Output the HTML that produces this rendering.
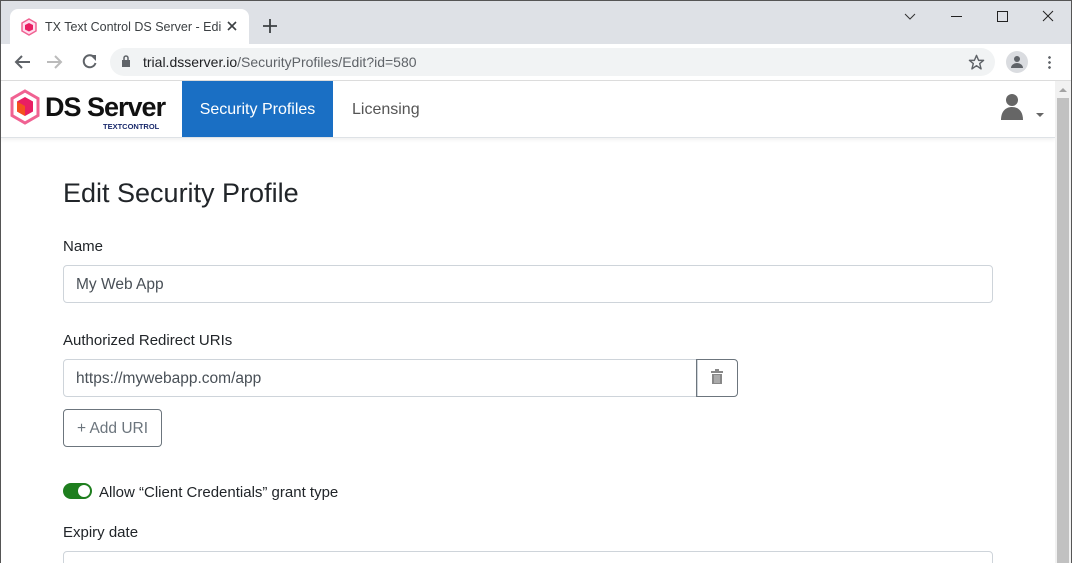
<!DOCTYPE html>
<html><head><style>
*{box-sizing:border-box;margin:0;padding:0}
html,body{width:1072px;height:563px;overflow:hidden}
body{background:#fff;font-family:"Liberation Sans",sans-serif;position:relative}
.abs{position:absolute}
.lbl{position:absolute;left:63px;font-size:15px;color:#212529}
.inp{position:absolute;border:1px solid #ced4da;border-radius:4px;font-size:15.5px;color:#495057;padding:10px 12px 0}
</style></head><body>
<div class="abs" style="left:0;top:0;width:1072px;height:44px;background:#dee1e6;border-top:1px solid #555"></div>
<div class="abs" style="left:0;top:0;width:1px;height:563px;background:#555;z-index:5"></div>
<div class="abs" style="right:0;top:0;width:1px;height:563px;background:#555;z-index:5"></div>
<div class="abs" style="left:10px;top:9px;width:239px;height:36px;background:#fff;border-radius:8px 8px 0 0"></div>
<svg class="abs" style="left:20px;top:18px" width="18" height="18" viewBox="0 0 18 18"><path d="M9 1 L16 5 V13 L9 17 L2 13 V5Z" fill="#fde" stroke="#f06292" stroke-width="1.5"/><path d="M9 5 L13 7 V11.5 L9 13.5 L5 11.5 V7Z" fill="#e91e63"/></svg>
<div class="abs" style="left:45px;top:20px;font-size:12.5px;color:#3c4043;white-space:nowrap;width:176px;overflow:hidden">TX Text Control DS Server - Edit S</div>
<svg class="abs" style="left:227px;top:21px" width="10" height="10"><path d="M1 1l8 8M9 1l-8 8" stroke="#3c4043" stroke-width="1.6"/></svg>
<svg class="abs" style="left:263px;top:19px" width="14" height="14"><path d="M7 0v14M0 7h14" stroke="#3c4043" stroke-width="1.8"/></svg>
<svg class="abs" style="left:900px;top:8px" width="170" height="20"><path d="M5 6l5 5 5-5" stroke="#333" fill="none"/><path d="M51 8.5h11" stroke="#222"/><rect x="97.5" y="3.5" width="10" height="10" stroke="#222" fill="none"/><path d="M143 3l10 10M153 3l-10 10" stroke="#222"/></svg>
<div class="abs" style="left:0;top:44px;width:1072px;height:37px;background:#fff;border-bottom:1px solid #ddd"></div>
<svg class="abs" style="left:14px;top:54px" width="120" height="16"><path d="M16 8H2M8 2L2 8l6 6" stroke="#5f6368" stroke-width="2" fill="none"/><path d="M33 8h14M41 2l6 6-6 6" stroke="#bbb" stroke-width="2" fill="none"/><path d="M80 3a6 6 0 1 0 1.5 6" stroke="#5f6368" stroke-width="2" fill="none"/><path d="M76 1h6v6z" fill="#5f6368"/></svg>
<div class="abs" style="left:110px;top:48px;width:885px;height:28px;background:#f1f3f4;border-radius:14px"></div>
<svg class="abs" style="left:121px;top:55px" width="10" height="13"><rect x="1" y="5" width="8" height="7" fill="#5f6368"/><path d="M3 5V3a2 2 0 0 1 4 0v2" stroke="#5f6368" fill="none" stroke-width="1.5"/></svg>
<div class="abs" style="left:143px;top:54px;font-size:14px;color:#202124">trial.dsserver.io<span style="color:#5f6368">/SecurityProfiles/Edit?id=580</span></div>
<svg class="abs" style="left:968px;top:54px" width="17" height="17" viewBox="0 0 24 24"><path d="M12 2l3 7h7l-5.5 4.5 2 7.5L12 16.5 5.5 21l2-7.5L2 9h7z" stroke="#5f6368" stroke-width="2" fill="none" stroke-linejoin="round"/></svg>
<div class="abs" style="left:1006px;top:51px;width:22px;height:22px;border-radius:50%;background:#dadce0"></div>
<svg class="abs" style="left:1009px;top:54px" width="16" height="16"><circle cx="8" cy="5" r="3" fill="#5f6368"/><path d="M2 14a6 5 0 0 1 12 0z" fill="#5f6368"/></svg>
<div class="abs" style="left:1048px;top:55px;width:3px;height:14px;background:radial-gradient(circle,#5f6368 1.2px,transparent 1.5px) 0 0/3px 5px"></div>
<div class="abs" style="left:0;top:81px;width:1055px;height:57px;border-bottom:1px solid #dee2e6;box-shadow:0 2px 4px rgba(0,0,0,.06)"></div>
<svg class="abs" style="left:9px;top:89px" width="32" height="36" viewBox="0 0 32 36"><path d="M16 2 L29 9.5 V26.5 L16 34 L3 26.5 V9.5Z" fill="#fff" stroke="#f06292" stroke-width="3"/><path d="M16 8 L24 12.5 V22.5 L16 27 L8 22.5 V12.5Z" fill="#e91e63"/><path d="M8 12.5 L16 17 V27 L8 22.5Z" fill="#f4511e"/></svg>
<div class="abs" style="left:45px;top:92px;font-size:27px;font-weight:bold;color:#111;letter-spacing:-1px">DS Server</div>
<div class="abs" style="left:103px;top:122px;font-size:7.5px;color:#1a2a6c;font-weight:bold">TEXTCONTROL</div>
<div class="abs" style="left:182px;top:81px;width:151px;height:56px;background:#1a6fc4;color:#fff;font-size:16px;text-align:center;line-height:58px">Security Profiles</div>
<div class="abs" style="left:352px;top:81px;font-size:16px;color:#555;line-height:58px">Licensing</div>
<svg class="abs" style="left:1000px;top:93px" width="48" height="28"><circle cx="12" cy="7" r="6" fill="#666"/><path d="M1 27c0-9 5-13 11-13s11 4 11 13z" fill="#666"/><path d="M36 20h8l-4 4z" fill="#666"/></svg>
<div class="abs" style="left:1055px;top:81px;width:16px;height:482px;background:#f1f1f1"></div>
<div class="abs" style="left:1059px;top:88px;border:4px solid transparent;border-bottom:4px solid #a3a3a3;border-top:0"></div>
<div class="abs" style="left:1057px;top:98px;width:12px;height:465px;background:#c1c1c1"></div>
<div class="abs" style="left:63px;top:178px;font-size:27px;color:#212529">Edit Security Profile</div>
<div class="lbl" style="top:238px">Name</div>
<div class="inp" style="left:63px;top:265px;width:930px;height:38px">My Web App</div>
<div class="lbl" style="top:332px">Authorized Redirect URIs</div>
<div class="inp" style="left:63px;top:359px;width:635px;height:38px;border-radius:4px 0 0 4px">https://mywebapp.com/app</div>
<div class="abs" style="left:696px;top:359px;width:42px;height:38px;border:1px solid #6c757d;border-radius:0 4px 4px 0"></div>
<svg class="abs" style="left:710px;top:369px" width="14" height="16"><rect x="5" y="0" width="4" height="2" fill="#888"/><rect x="1" y="2" width="12" height="2" fill="#888"/><rect x="2" y="5" width="10" height="10" fill="#888"/><path d="M5 6v8M7 6v8M9 6v8" stroke="#ccc"/></svg>
<div class="abs" style="left:63px;top:409px;width:99px;height:38px;border:1px solid #6c757d;border-radius:4px;font-size:15.5px;color:#6c757d;text-align:center;line-height:38px">+ Add URI</div>
<div class="abs" style="left:63px;top:483px;width:29px;height:16px;border-radius:8px;background:#1e7e1e"></div>
<div class="abs" style="left:78px;top:485px;width:12px;height:12px;border-radius:50%;background:#fff"></div>
<div class="abs" style="left:99px;top:484px;font-size:15px;color:#212529">Allow “Client Credentials” grant type</div>
<div class="lbl" style="top:524px">Expiry date</div>
<div class="inp" style="left:63px;top:551px;width:930px;height:38px"></div>
</body></html>
